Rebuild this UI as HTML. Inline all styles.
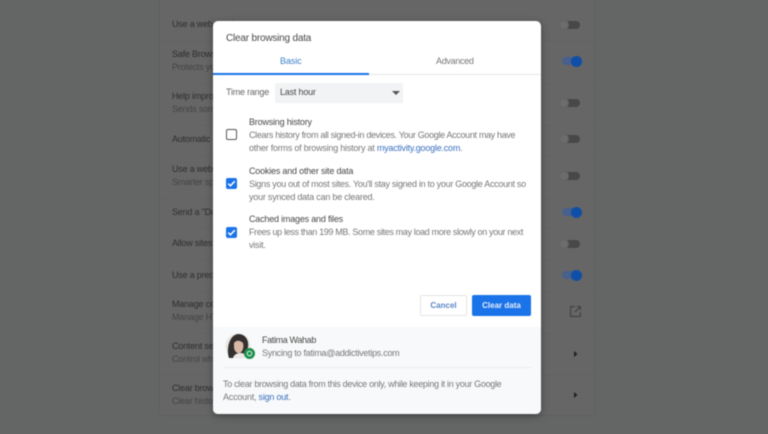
<!DOCTYPE html>
<html><head><meta charset="utf-8">
<style>
html,body{margin:0;padding:0;width:768px;height:434px;overflow:hidden;background:#646665}
*{box-sizing:border-box}
body{font-family:"Liberation Sans",sans-serif;position:relative}
#base{position:absolute;left:0;top:0;width:768px;height:434px;background:#646665}
#wrap{position:absolute;left:0;top:0;width:768px;height:434px;filter:blur(.4px)}
.a{position:absolute;white-space:nowrap;line-height:13px}
.card{position:absolute;left:159px;top:-5px;width:436px;height:421px;background:#666666;border:1px solid #5f6160;border-radius:3px}
.bg{color:#2e2e2e;font-size:9px;letter-spacing:-.2px}
.bg2{color:#444;font-size:9px;letter-spacing:-.2px}
.sep{position:absolute;left:160px;width:434px;height:1px;background:#626262}
.sw{position:absolute;left:559px;width:23px;height:14px}
.sw i{position:absolute;left:5px;top:3px;width:16px;height:8px;border-radius:4px;background:#484848}
.sw b{position:absolute;left:0;top:2px;width:10px;height:10px;border-radius:50%;background:#6c6c6c;border:1px solid #636363}
.sw.on i{left:3px;background:#48608c}
.sw.on b{left:12px;top:1.5px;width:11px;height:11px;background:#0f4fa8;border:0}
.dlg{position:absolute;left:213px;top:21px;width:328px;height:393px;background:#fff;border-radius:5px;box-shadow:0 2px 8px rgba(0,0,0,.35);overflow:hidden}
.t1{font-size:9px;letter-spacing:-.2px;color:#484848}
.t2{font-size:9px;letter-spacing:-.22px;color:#777}
.cb{position:absolute;left:13px;width:11px;height:11px;border-radius:2px;background:#1a73e8}
.lnk{color:#3a70c0}
</style></head><body><div id="base"></div><div id="wrap">
<div class="card"></div>
<div class="sep" style="top:40px"></div>
<div class="sep" style="top:83px"></div>
<div class="sep" style="top:125px"></div>
<div class="sep" style="top:156px"></div>
<div class="sep" style="top:198px"></div>
<div class="sep" style="top:228px"></div>
<div class="sep" style="top:259px"></div>
<div class="sep" style="top:291px"></div>
<div class="sep" style="top:333px"></div>
<div class="sep" style="top:375px"></div>

<div class="a bg" style="left:172px;top:18px">Use a web service</div>
<div class="a bg" style="left:172px;top:48px">Safe Browsing</div>
<div class="a bg2" style="left:172px;top:61px">Protects you</div>
<div class="a bg" style="left:172px;top:90px">Help improve</div>
<div class="a bg2" style="left:172px;top:103px">Sends some</div>
<div class="a bg" style="left:172px;top:133px">Automatic</div>
<div class="a bg" style="left:172px;top:163px">Use a web</div>
<div class="a bg2" style="left:172px;top:176px">Smarter sp</div>
<div class="a bg" style="left:172px;top:206px">Send a "Do</div>
<div class="a bg" style="left:172px;top:237px">Allow sites</div>
<div class="a bg" style="left:172px;top:269px">Use a predi</div>
<div class="a bg" style="left:172px;top:298px">Manage ce</div>
<div class="a bg2" style="left:172px;top:311px">Manage HT</div>
<div class="a bg" style="left:172px;top:340px">Content se</div>
<div class="a bg2" style="left:172px;top:353px">Control wh</div>
<div class="a bg" style="left:172px;top:382px">Clear brow</div>
<div class="a bg2" style="left:172px;top:395px">Clear histor</div>

<div class="sw" style="top:18px"><i></i><b></b></div>
<div class="sw on" style="top:54px"><i></i><b></b></div>
<div class="sw" style="top:96px"><i></i><b></b></div>
<div class="sw" style="top:132px"><i></i><b></b></div>
<div class="sw" style="top:169px"><i></i><b></b></div>
<div class="sw on" style="top:205px"><i></i><b></b></div>
<div class="sw" style="top:237px"><i></i><b></b></div>
<div class="sw on" style="top:268px"><i></i><b></b></div>

<svg style="position:absolute;left:570px;top:306px" width="11" height="11" viewBox="0 0 11 11" fill="none" stroke="#404040" stroke-width="1.1"><path d="M5 .6H.6v9.800h9.800V6M7 .6h3.400V4M10.400 .6L5 6"/></svg>
<svg style="position:absolute;left:574px;top:351px" width="4" height="6" viewBox="0 0 4 6"><path d="M0 0l3.500 3L0 6z" fill="#222"/></svg>
<svg style="position:absolute;left:574px;top:392px" width="4" height="6" viewBox="0 0 4 6"><path d="M0 0l3.500 3L0 6z" fill="#222"/></svg>

<div class="dlg">
  <div class="a" style="left:13px;top:11px;font-size:10px;letter-spacing:-.2px;color:#484848">Clear browsing data</div>
  <div class="a" style="left:67px;top:34px;font-size:9px;letter-spacing:-.1px;color:#3f7fc8">Basic</div>
  <div class="a" style="left:223px;top:34px;font-size:9px;letter-spacing:-.3px;color:#777">Advanced</div>
  <div style="position:absolute;left:0;top:53px;width:328px;height:1px;background:#e6e6e6"></div>
  <div style="position:absolute;left:0;top:52px;width:156px;height:2px;background:#1a73e8"></div>

  <div class="a t2" style="left:13px;top:65px;color:#666">Time range</div>
  <div style="position:absolute;left:62px;top:62px;width:128px;height:20px;background:#f1f3f4;border-radius:2px"></div>
  <div class="a t1" style="left:67px;top:65px">Last hour</div>
  <svg style="position:absolute;left:179px;top:70px" width="8" height="4" viewBox="0 0 8 4"><path d="M0 0h8L4 4z" fill="#555"/></svg>

  <div class="a t1" style="left:36px;top:95px">Browsing history</div>
  <div class="a t2" style="left:36px;top:108px;letter-spacing:-.33px">Clears history from all signed-in devices. Your Google Account may have</div>
  <div class="a t2" style="left:36px;top:121px">other forms of browsing history at <span class="lnk">myactivity.google.com</span>.</div>
  <div style="position:absolute;left:13px;top:108px;width:11px;height:11px;border:1.6px solid #555;border-radius:2px"></div>

  <div class="a t1" style="left:36px;top:144px">Cookies and other site data</div>
  <div class="a t2" style="left:36px;top:157px;letter-spacing:-.29px">Signs you out of most sites. You'll stay signed in to your Google Account so</div>
  <div class="a t2" style="left:36px;top:170px">your synced data can be cleared.</div>
  <div class="cb" style="top:157px"><svg width="11" height="11" viewBox="0 0 11 11" style="display:block"><path d="M2.200 5.600l2.200 2.200 4.400-4.600" fill="none" stroke="#fff" stroke-width="1.500"/></svg></div>

  <div class="a t1" style="left:36px;top:192px">Cached images and files</div>
  <div class="a t2" style="left:36px;top:205px;letter-spacing:-.34px">Frees up less than 199 MB. Some sites may load more slowly on your next</div>
  <div class="a t2" style="left:36px;top:218px">visit.</div>
  <div class="cb" style="top:206px"><svg width="11" height="11" viewBox="0 0 11 11" style="display:block"><path d="M2.200 5.600l2.200 2.200 4.400-4.600" fill="none" stroke="#fff" stroke-width="1.500"/></svg></div>

  <div style="position:absolute;left:207px;top:274px;width:47px;height:21px;border:1px solid #e4e4e4;border-radius:2px;background:#fff"></div>
  <div class="a" style="left:207px;top:278px;width:47px;text-align:center;font-size:8px;font-weight:700;color:#5a86c4">Cancel</div>
  <div style="position:absolute;left:259px;top:274px;width:59px;height:21px;border-radius:2px;background:#1a73e8"></div>
  <div class="a" style="left:259px;top:278px;width:59px;text-align:center;font-size:8px;font-weight:700;color:#e4eefc">Clear data</div>

  <div style="position:absolute;left:0;top:306px;width:328px;height:87px;background:#f8f9fa"></div>
  <svg style="position:absolute;left:12px;top:312px" width="32" height="28" viewBox="0 0 32 28">
    <circle cx="13" cy="13" r="12.500" fill="#e9e5e2"/>
    <path d="M4 25C1 17 4 2 13 1c8 0 11 7 10 13l-2 10-6 1z" fill="#33302f"/>
    <path d="M9 10c2-3 6-3 9 0 1 4 0 8-3 10-3 1-6-2-6-6z" fill="#d9b8a6"/>
    <path d="M8 25c1-4 5-5 8-5 3 0 5 2 6 4l-5 1.500z" fill="#ece8e6"/>
    <circle cx="24.500" cy="20.500" r="5.500" fill="#1a8f4c"/>
    <circle cx="24.500" cy="20.500" r="2.300" fill="none" stroke="#d8efe0" stroke-width="1"/>
  </svg>
  <div class="a t1" style="left:49px;top:313px;letter-spacing:-.35px">Fatima Wahab</div>
  <div class="a t2" style="left:49px;top:326px;letter-spacing:-.28px">Syncing to fatima@addictivetips.com</div>
  <div style="position:absolute;left:10px;top:346px;width:308px;height:1px;background:#ececec"></div>
  <div class="a t2" style="left:10px;top:357px;letter-spacing:-.3px">To clear browsing data from this device only, while keeping it in your Google</div>
  <div class="a t2" style="left:10px;top:370px">Account, <span class="lnk">sign out</span>.</div>
</div>
</div></body></html>
